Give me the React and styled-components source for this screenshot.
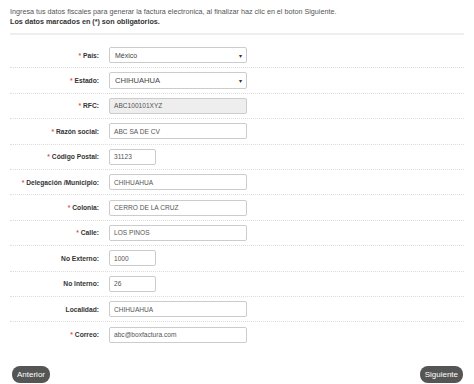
import React from 'react'
import styled, { createGlobalStyle } from 'styled-components'

const Global = createGlobalStyle`
body {
  margin: 0;
  background: #fff;
  font-family: "Liberation Sans", Arial, sans-serif;
}
`

const fields = [
  { label: 'País', req: true, value: 'México', kind: 'select' },
  { label: 'Estado', req: true, value: 'CHIHUAHUA', kind: 'select', big: true },
  { label: 'RFC', req: true, value: 'ABC100101XYZ', disabled: true },
  { label: 'Razón social', req: true, value: 'ABC SA DE CV' },
  { label: 'Código Postal', req: true, value: '31123', short: true },
  { label: 'Delegación /Municipio', req: true, value: 'CHIHUAHUA' },
  { label: 'Colonia', req: true, value: 'CERRO DE LA CRUZ' },
  { label: 'Calle', req: true, value: 'LOS PINOS' },
  { label: 'No Externo', value: '1000', short: true },
  { label: 'No Interno', value: '26', short: true },
  { label: 'Localidad', value: 'CHIHUAHUA' },
  { label: 'Correo', req: true, value: 'abc@boxfactura.com', last: true },
]

const App = () => {
  return (
    <Page>
      <Global />
      <Intro>
        Ingresa tus datos fiscales para generar la factura electronica, al finalizar haz clic en el boton Siguiente.
        <br />
        <strong>Los datos marcados en (*) son obligatorios.</strong>
      </Intro>
      <Form>
        {fields.map((f) => (
          <Row key={f.label} last={f.last}>
            <Label>
              {f.req && <Star>*</Star>} {f.label}:
            </Label>
            {f.kind === 'select' ? (
              <Select big={f.big}>
                <span>{f.value}</span>
                <Caret>▾</Caret>
              </Select>
            ) : (
              <Field short={f.short} disabled={f.disabled}>{f.value}</Field>
            )}
          </Row>
        ))}
      </Form>
      <Actions>
        <Button>Anterior</Button>
        <Button>Siguiente</Button>
      </Actions>
    </Page>
  )
}

export default App

const Page = styled.div`
width: 474px;
height: 384px;
overflow: hidden;
padding: 0 10px;
box-sizing: border-box;
`
const Intro = styled.div`
padding-top: 7px;
padding-bottom: 6px;
font-size: 7.2px;
line-height: 10px;
color: #555;
border-bottom: 2px solid #eee;
strong {
  color: #333;
  font-weight: bold;
}
`
const Form = styled.div`
display: flex;
flex-direction: column;
padding-top: 8px;
`
const Row = styled.div`
height: 25.4px;
box-sizing: border-box;
display: flex;
align-items: center;
gap: 10px;
border-bottom: ${(p) => (p.last ? 'none' : '1px dotted #dcdcdc')};
`
const Label = styled.div`
width: 89px;
text-align: right;
font-size: 6.7px;
font-weight: bold;
color: #333;
`
const Star = styled.span`
color: #d9534f;
`
const Field = styled.div`
width: ${(p) => (p.short ? '47px' : '138px')};
height: 16px;
box-sizing: border-box;
border: 1px solid #ccc;
border-radius: 2px;
background: ${(p) => (p.disabled ? '#eee' : '#fff')};
padding: 0 4px;
display: flex;
align-items: center;
font-size: 6.6px;
color: #555;
`
const Select = styled.div`
width: 138px;
height: ${(p) => (p.big ? '17px' : '16px')};
box-sizing: border-box;
border: 1px solid #ccc;
border-radius: 2px;
background: #fff;
padding: 0 4px 0 5px;
display: flex;
align-items: center;
justify-content: space-between;
font-size: ${(p) => (p.big ? '7.6px' : '7px')};
color: #444;
`
const Caret = styled.span`
font-size: 6px;
color: #333;
`
const Actions = styled.div`
display: flex;
justify-content: space-between;
padding: 0 1px 0 2px;
margin-top: 18px;
`
const Button = styled.div`
background: #555;
color: #fff;
border-radius: 8px;
height: 17px;
padding: 0 5px;
display: flex;
align-items: center;
font-size: 8px;
`
